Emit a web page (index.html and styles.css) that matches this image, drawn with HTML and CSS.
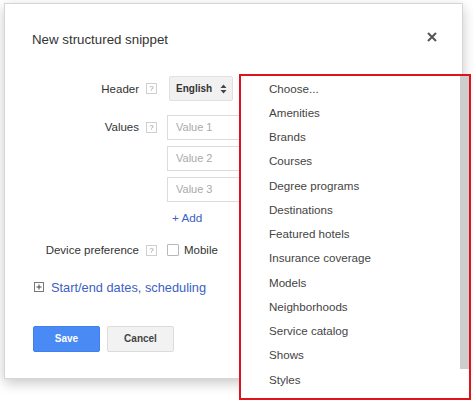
FILE: index.html
```html
<!DOCTYPE html>
<html>
<head>
<meta charset="utf-8">
<link rel="stylesheet" href="styles.css">
</head>
<body>
<div class="dialog">
  <div class="head">
    <div class="title">New structured snippet</div>
    <svg class="close" width="10" height="10" viewBox="0 0 10 10"><path d="M1 1L9 9M9 1L1 9" stroke="#555" stroke-width="2"/></svg>
  </div>
  <div class="row r-header">
    <div class="label">Header</div>
    <div class="help">?</div>
    <div class="select">English
      <svg width="7" height="10" viewBox="0 0 7 10"><path d="M3.5 0.5L6.5 4H0.5Z M3.5 9.5L6.5 6H0.5Z" fill="#444"/></svg>
    </div>
  </div>
  <div class="row r-values">
    <div class="label">Values</div>
    <div class="help">?</div>
    <div class="inputs">
      <div class="input">Value 1</div>
      <div class="input">Value 2</div>
      <div class="input">Value 3</div>
    </div>
  </div>
  <div class="add">+ Add</div>
  <div class="row r-device">
    <div class="label">Device preference</div>
    <div class="help">?</div>
    <div class="check"></div>
    <div class="mobile">Mobile</div>
  </div>
  <div class="sched">
    <svg width="10" height="10" viewBox="0 0 10 10"><rect x="0.5" y="0.5" width="9" height="9" fill="#fff" stroke="#777"/><path d="M2.5 5H7.5M5 2.5V7.5" stroke="#444"/></svg>
    <span>Start/end dates, scheduling</span>
  </div>
  <div class="buttons">
    <div class="btn save">Save</div>
    <div class="btn cancel">Cancel</div>
  </div>
</div>
<div class="menu">
  <ul class="items">
    <li>Choose...</li>
    <li>Amenities</li>
    <li>Brands</li>
    <li>Courses</li>
    <li>Degree programs</li>
    <li>Destinations</li>
    <li>Featured hotels</li>
    <li>Insurance coverage</li>
    <li>Models</li>
    <li>Neighborhoods</li>
    <li>Service catalog</li>
    <li>Shows</li>
    <li>Styles</li>
  </ul>
  <div class="scrollbar"></div>
</div>
</body>
</html>
```

FILE: styles.css
```css
html, body {
  margin: 0;
  padding: 0;
  background: #fff;
  font-family: "Liberation Sans", Arial, sans-serif;
  color: #333;
}
body {
  width: 474px;
  height: 404px;
  overflow: hidden;
  position: relative;
}
.dialog {
  box-sizing: border-box;
  margin: 3px 0 0 4px;
  width: 459px;
  height: 376px;
  border: 1px solid #d6d6d6;
  box-shadow: 0 4px 12px rgba(0,0,0,0.22);
  background: #fff;
  padding: 28px 25px 0 27px;
}
.head {
  display: flex;
  justify-content: space-between;
  align-items: center;
  height: 16px;
}
.title {
  font-size: 13.3px;
  line-height: 16px;
  color: #333;
}
.close {
  display: block;
  margin-top: -6px;
}
.row {
  display: flex;
  align-items: center;
}
.label {
  width: 107px;
  text-align: right;
  font-size: 11.5px;
  color: #333;
}
.help {
  box-sizing: border-box;
  margin-left: 7px;
  width: 11px;
  height: 11px;
  border: 1px solid #cfcfcf;
  color: #999;
  font-size: 8px;
  line-height: 9px;
  text-align: center;
}
.r-header {
  margin-top: 28px;
  height: 25px;
}
.select {
  box-sizing: border-box;
  margin-left: 12px;
  width: 64px;
  height: 25px;
  background: #f1f1f1;
  border: 1px solid #e0e0e0;
  border-radius: 2px;
  display: flex;
  align-items: center;
  justify-content: space-between;
  padding: 0 5px 0 6px;
  font-size: 10px;
  font-weight: bold;
  color: #333;
}
.select svg { display: block; }
.r-values {
  margin-top: 14px;
  align-items: flex-start;
}
.r-values .label {
  line-height: 25px;
}
.r-values .help {
  margin-top: 7px;
}
.inputs {
  margin-left: 10px;
  display: flex;
  flex-direction: column;
  gap: 6px;
}
.input {
  box-sizing: border-box;
  width: 110px;
  height: 25px;
  border: 1px solid #dcdcdc;
  padding-left: 8px;
  font-size: 11px;
  line-height: 23px;
  color: #aaa;
}
.add {
  margin-top: 8px;
  margin-left: 140px;
  font-size: 11.7px;
  line-height: 16px;
  color: #3d5fc4;
}
.r-device {
  margin-top: 16px;
  height: 16px;
}
.check {
  box-sizing: border-box;
  margin-left: 10px;
  width: 12px;
  height: 12px;
  border: 1px solid #b8b8b8;
  border-radius: 1px;
  background: #fff;
}
.mobile {
  margin-left: 5px;
  font-size: 11.5px;
  color: #333;
}
.sched {
  margin-top: 21px;
  margin-left: 2px;
  height: 16px;
  display: flex;
  align-items: center;
  gap: 7px;
  font-size: 12.8px;
  color: #3d5fc4;
}
.sched svg { display: block; }
.buttons {
  margin-top: 31px;
  margin-left: 1px;
  display: flex;
  gap: 7px;
}
.btn {
  box-sizing: border-box;
  width: 67px;
  height: 26px;
  border-radius: 2px;
  font-size: 10px;
  font-weight: bold;
  text-align: center;
  line-height: 24px;
}
.save {
  background: #4a8af4;
  border: 1px solid #3f80ec;
  color: #fff;
}
.cancel {
  background: #f2f2f2;
  border: 1px solid #dcdcdc;
  color: #444;
}
.menu {
  position: absolute;
  left: 239px;
  top: 74px;
  box-sizing: border-box;
  width: 232px;
  height: 326px;
  border: 2px solid #e0131c;
  background: #fff;
}
.items {
  list-style: none;
  margin: 0;
  padding: 0.5px 0 0 28px;
}
.items li {
  height: 24.27px;
  line-height: 24.27px;
  font-size: 11.6px;
  color: #444;
}
.scrollbar {
  position: absolute;
  right: 0;
  top: 0;
  width: 9px;
  height: 293px;
  background: #cdcdcd;
}
```
